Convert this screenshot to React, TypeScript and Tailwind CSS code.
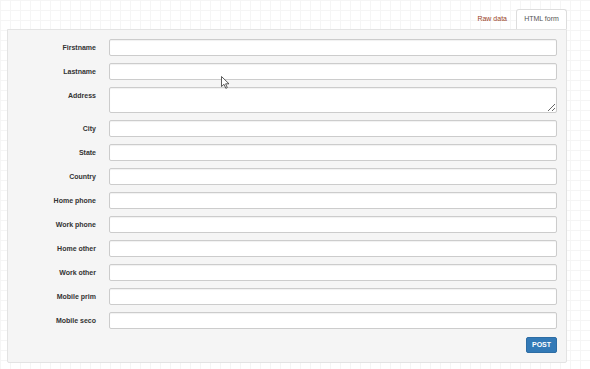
const fields = [
  'Firstname',
  'Lastname',
  'Address',
  'City',
  'State',
  'Country',
  'Home phone',
  'Work phone',
  'Home other',
  'Work other',
  'Mobile prim',
  'Mobile seco',
];

const Cursor = () => (
  <svg
    className="absolute left-[221px] top-[76px]"
    width="9"
    height="13"
    viewBox="0 0 9 13"
  >
    <path
      d="M0.5 0.5 L0.5 10.5 L3 8.3 L4.8 12.3 L6.3 11.6 L4.6 7.8 L8 7.8 Z"
      fill="#fff"
      stroke="#333"
      strokeWidth="0.8"
      strokeLinejoin="round"
    />
  </svg>
);

export default function App() {
  return (
    <div className="relative h-[369px] w-[590px] overflow-hidden bg-white bg-[linear-gradient(#f5f5f5_1px,transparent_1px),linear-gradient(90deg,#f5f5f5_1px,transparent_1px)] bg-[size:10px_10px] font-['Liberation_Sans',Arial,sans-serif] text-[#333]">
      <div className="ml-[7px] w-[560px] pt-[9px]">
        <div className="flex h-[20px] justify-end text-[7px]">
          <div className="mr-[7px] flex items-center px-[2px] text-[#9a3f25]">Raw data</div>
          <div className="flex w-[51px] items-center justify-center rounded-t-[3px] border border-b-0 border-[#dddddd] bg-white text-[#555]">
            HTML form
          </div>
        </div>
        <div className="h-[334px] rounded-b-[2px] border border-[#e3e3e3] bg-[#f5f5f5] pt-[9px]">
          <div className="flex flex-col gap-[7px]">
            {fields.map((f) => (
              <div key={f} className="flex items-start">
                <label className="w-[88px] shrink-0 pt-[4px] text-right text-[7px] leading-[9px] font-bold text-[#333]">
                  {f}
                </label>
                <div className="ml-[13px] w-[448px]">
                  {f === 'Address' ? (
                    <textarea className="block h-[26px] w-full resize-y rounded-[2px] border border-[#cccccc] bg-white shadow-[inset_0_1px_1px_rgba(0,0,0,0.06)]" />
                  ) : (
                    <input
                      type="text"
                      className="block h-[17px] w-full rounded-[2px] border border-[#cccccc] bg-white shadow-[inset_0_1px_1px_rgba(0,0,0,0.06)]"
                    />
                  )}
                </div>
              </div>
            ))}
          </div>
          <div className="mr-[9px] mt-[8px] flex justify-end">
            <button className="h-[16px] w-[31px] rounded-[2px] border border-[#2e6da4] bg-[#337ab7] text-[7px] font-bold text-white">
              POST
            </button>
          </div>
        </div>
      </div>
      <Cursor />
    </div>
  );
}
